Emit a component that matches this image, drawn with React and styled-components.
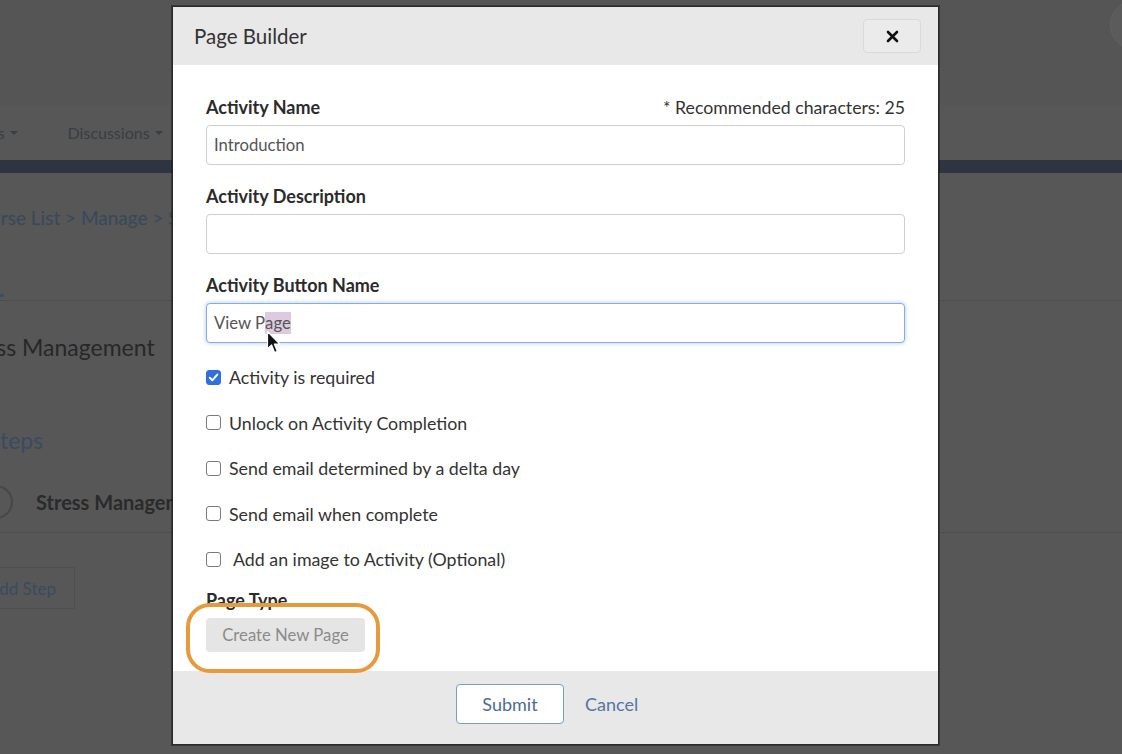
import React from "react";
import styled, { createGlobalStyle, css } from "styled-components";

const Global = createGlobalStyle`
  html, body { margin: 0; padding: 0; background: #575757; }
  body { font-family: Lato, "Open Sans", "Liberation Sans", sans-serif; }
  * { box-sizing: border-box; }
`;

/* page + dialog share one grid cell, the dialog stacked on top */
const Screen = styled.div`
  display: grid;
  grid-template: 754px / 1122px;
  width: 1122px;
  height: 754px;
  overflow: hidden;
`;

const Page = styled.div`
  grid-area: 1 / 1;
  display: flex;
  flex-direction: column;
  background: #575757;
`;

const TopBar = styled.header`
  height: 105px;
  flex: none;
  background: #555555;
  display: flex;
  justify-content: flex-end;
  align-items: flex-start;
`;

const Avatar = styled.div`
  width: 50px;
  height: 50px;
  border-radius: 50%;
  background: #5b5b5b;
  border: 1px solid #626262;
  margin-right: -38px;
`;

const Nav = styled.nav`
  height: 55px;
  flex: none;
  background: #575757;
  display: flex;
  align-items: center;
  gap: 50px;
  font-size: 16px;
  color: #393d45;
`;

const NavItem = styled.span`
  display: inline-flex;
  align-items: center;
  gap: 5px;
  margin-left: ${(p) => p.$offset || 0}px;
  &::after {
    content: "";
    border-left: 4px solid transparent;
    border-right: 4px solid transparent;
    border-top: 4px solid #393d45;
  }
`;

const Band = styled.div`
  height: 13px;
  flex: none;
  background: #2e3541;
`;

const Main = styled.main`
  flex: 1;
  display: flex;
  flex-direction: column;
  background: #575757;
`;

const Crumbs = styled.div`
  margin-top: 33px;
  margin-left: -33px;
  font-size: 19px;
  line-height: 24px;
  color: #37485c;
  white-space: nowrap;
`;

const Tabs = styled.div`
  margin-top: 46px;
  height: 25px;
  border-bottom: 1px solid #4e4e4e;
  display: flex;
  align-items: flex-end;
`;

const Tab = styled.div`
  margin-left: -2px;
  width: 6px;
  height: 3px;
  margin-bottom: 3px;
  background: #34506e;
`;

const PageTitle = styled.h1`
  margin: 32px 0 0 -44px;
  font-size: 23px;
  font-weight: 400;
  line-height: 28px;
  color: #272727;
  white-space: nowrap;
`;

const SectionTitle = styled.h2`
  margin: 65px 0 0 -12px;
  font-size: 23px;
  font-weight: 400;
  line-height: 28px;
  color: #394b61;
`;

const StepRow = styled.div`
  margin-top: 25px;
  height: 54px;
  display: flex;
  align-items: center;
  gap: 23px;
  border-bottom: 1px solid #4f4f4f;
  padding-bottom: 8px;
`;

const StepCircle = styled.div`
  width: 34px;
  height: 34px;
  border-radius: 50%;
  border: 2px solid #474747;
  margin-left: -21px;
`;

const StepName = styled.span`
  font-size: 20px;
  font-weight: 700;
  color: #2a2a2a;
  white-space: nowrap;
`;

const AddStep = styled.div`
  margin-top: 34px;
  margin-left: -30px;
  width: 105px;
  height: 42px;
  border: 1px solid #4e4e4e;
  display: flex;
  align-items: center;
  justify-content: flex-end;
  padding-right: 18px;
  font-size: 17px;
  color: #394b61;
  white-space: nowrap;
`;

/* ---------- modal ---------- */

const Modal = styled.div`
  grid-area: 1 / 1;
  align-self: start;
  justify-self: start;
  margin: 6px 0 0 172px;
  width: 767px;
  height: 739px;
  background: #ffffff;
  border: 1px solid #2a2a2a;
  box-shadow: 0 0 0 1px rgba(0, 0, 0, 0.35);
  display: flex;
  flex-direction: column;
  overflow: hidden;
`;

const Header = styled.div`
  height: 58px;
  flex: none;
  background: #e8e8e8;
  display: flex;
  align-items: center;
  justify-content: space-between;
  padding: 0 17px 0 21px;
`;

const Title = styled.h3`
  margin: 0;
  font-size: 20.5px;
  font-weight: 400;
  color: #333333;
`;

const CloseButton = styled.button`
  width: 58px;
  height: 34px;
  border: 1px solid #dadada;
  border-radius: 4px;
  background: #ebebeb;
  display: flex;
  align-items: center;
  justify-content: center;
  padding: 0;
`;

const Body = styled.div`
  flex: 1 1 auto;
  min-height: 0;
  padding: 30px 33px 0 33px;
  display: flex;
  flex-direction: column;
`;

const Field = styled.div`
  display: flex;
  flex-direction: column;
  & + & {
    margin-top: 19px;
  }
`;

const LabelRow = styled.div`
  display: flex;
  justify-content: space-between;
  align-items: center;
  height: 24px;
`;

const Label = styled.label`
  font-weight: 700;
  font-size: 18px;
  line-height: 24px;
  color: #2b2b2b;
`;

const Hint = styled.span`
  font-size: 17.7px;
  color: #333333;
`;

const TextBox = styled.div`
  position: relative;
  margin-top: 6px;
  height: 40px;
  border: 1px solid #cfcfcf;
  border-radius: 4px;
  padding: 0 7px;
  display: flex;
  align-items: center;
  font-size: 16.7px;
  color: #555555;
  background: #fff;
  ${(p) =>
    p.$focused &&
    css`
      border-color: #86ace0;
      box-shadow: 0 0 4px rgba(102, 150, 225, 0.55);
    `}
`;

const Selected = styled.span`
  background: #dccbe0;
  line-height: 22px;
  display: inline-block;
`;

const Cursor = styled.svg`
  position: absolute;
  left: 59px;
  top: 26px;
`;

const Checks = styled.div`
  margin-top: 22px;
  display: flex;
  flex-direction: column;
  gap: 21.5px;
`;

const CheckRow = styled.label`
  display: flex;
  align-items: center;
  gap: ${(p) => (p.$wide ? 12 : 8)}px;
  height: 24px;
  font-size: 17.8px;
  color: #333333;
`;

const Box = styled.span`
  width: 15px;
  height: 15px;
  border-radius: 3px;
  border: 1.5px solid ${(p) => (p.$checked ? "#2f6fdf" : "#7a7a7a")};
  background: ${(p) => (p.$checked ? "#2f6fdf" : "#ffffff")};
  display: inline-flex;
  align-items: center;
  justify-content: center;
  flex: none;
`;

const PageTypeSection = styled.div`
  position: relative;
  margin-top: 17px;
  display: flex;
  flex-direction: column;
  align-items: flex-start;
`;

const GhostButton = styled.button`
  margin-top: 6px;
  width: 159px;
  height: 34px;
  border: none;
  border-radius: 4px;
  background: #e5e5e5;
  color: #8b8b8b;
  font-family: inherit;
  font-size: 16.7px;
`;

const Highlight = styled.div`
  position: absolute;
  left: -20px;
  top: 15px;
  width: 194px;
  height: 70px;
  border: 4px solid #e79a3b;
  border-radius: 24px;
  pointer-events: none;
`;

const Footer = styled.div`
  height: 73px;
  flex: none;
  background: #e8e8e8;
  display: flex;
  align-items: flex-start;
  padding: 13px 0 0 283px;
`;

const Submit = styled.button`
  width: 108px;
  height: 40px;
  border: 1.5px solid #7b9dc2;
  border-radius: 4px;
  background: #ffffff;
  color: #4c6c90;
  font-family: inherit;
  font-size: 18px;
`;

const Cancel = styled.a`
  margin-left: 21px;
  line-height: 40px;
  font-size: 18px;
  color: #5576a0;
  text-decoration: none;
`;

const CheckMark = () => (
  <svg width="11" height="11" viewBox="0 0 11 11">
    <path d="M1.8 5.8 L4.3 8.3 L9.3 2.6" fill="none" stroke="#fff" strokeWidth="2" strokeLinecap="round" strokeLinejoin="round" />
  </svg>
);

const options = [
  { label: "Activity is required", checked: true },
  { label: "Unlock on Activity Completion" },
  { label: "Send email determined by a delta day" },
  { label: "Send email when complete" },
  { label: "Add an image to Activity (Optional)", wide: true },
];

export default function App() {
  return (
    <>
      <Global />
      <Screen>
        <Page>
          <TopBar>
            <Avatar />
          </TopBar>
          <Nav>
            <NavItem $offset={-52}>Courses</NavItem>
            <NavItem>Discussions</NavItem>
          </Nav>
          <Band />
          <Main>
            <Crumbs>Course List &gt; Manage &gt; Stress Management</Crumbs>
            <Tabs>
              <Tab />
            </Tabs>
            <PageTitle>Stress Management</PageTitle>
            <SectionTitle>Steps</SectionTitle>
            <StepRow>
              <StepCircle />
              <StepName>Stress Management</StepName>
            </StepRow>
            <AddStep>Add Step</AddStep>
          </Main>
        </Page>

        <Modal role="dialog" aria-label="Page Builder">
          <Header>
            <Title>Page Builder</Title>
            <CloseButton aria-label="Close">
              <svg width="13" height="13" viewBox="0 0 13 13">
                <path d="M2 2 L11 11 M11 2 L2 11" stroke="#111" strokeWidth="2.6" strokeLinecap="round" />
              </svg>
            </CloseButton>
          </Header>
          <Body>
            <Field>
              <LabelRow>
                <Label>Activity Name</Label>
                <Hint>* Recommended characters: 25</Hint>
              </LabelRow>
              <TextBox>Introduction</TextBox>
            </Field>
            <Field>
              <LabelRow>
                <Label>Activity Description</Label>
              </LabelRow>
              <TextBox />
            </Field>
            <Field>
              <LabelRow>
                <Label>Activity Button Name</Label>
              </LabelRow>
              <TextBox $focused>
                View P<Selected>age</Selected>
                <Cursor width="16" height="26" viewBox="0 0 16 26">
                  <path d="M1.5 1.5 L1.5 19 L5.6 15 L8.6 22.5 L11.3 21.3 L8.3 14 L13.8 14 Z" fill="#111" stroke="#fff" strokeWidth="1.2" strokeLinejoin="round" />
                </Cursor>
              </TextBox>
            </Field>
            <Checks>
              {options.map((o) => (
                <CheckRow key={o.label} $wide={o.wide}>
                  <Box $checked={o.checked}>{o.checked && <CheckMark />}</Box>
                  {o.label}
                </CheckRow>
              ))}
            </Checks>
            <PageTypeSection>
              <Label>Page Type</Label>
              <GhostButton>Create New Page</GhostButton>
              <Highlight />
            </PageTypeSection>
          </Body>
          <Footer>
            <Submit>Submit</Submit>
            <Cancel href="#">Cancel</Cancel>
          </Footer>
        </Modal>
      </Screen>
    </>
  );
}
